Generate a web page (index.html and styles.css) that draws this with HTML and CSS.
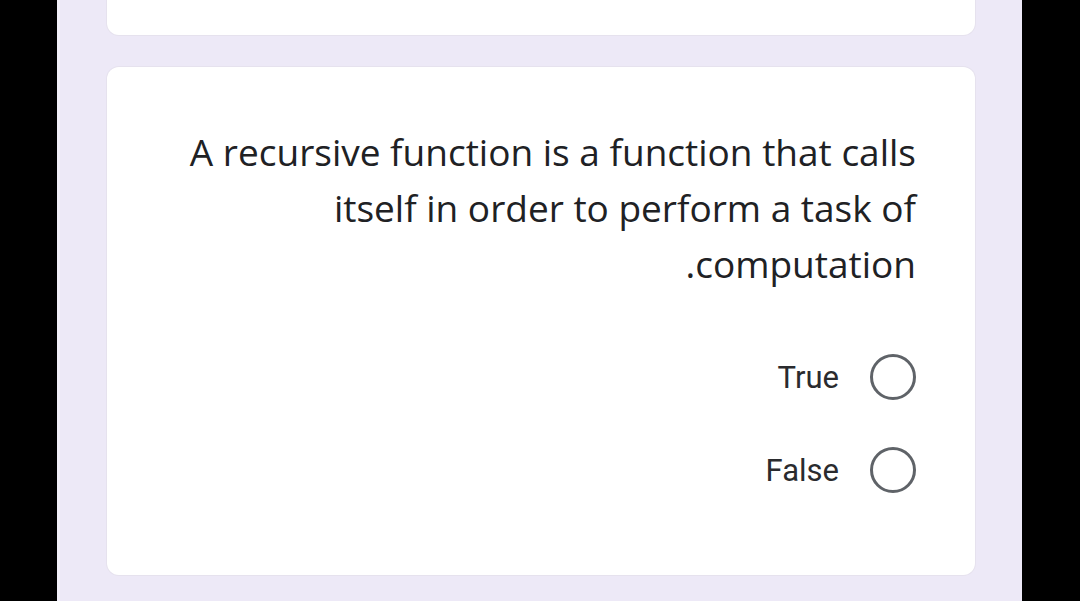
FILE: index.html
```html
<!DOCTYPE html>
<html lang="en">
<head>
<meta charset="utf-8">
<link rel="stylesheet" href="styles.css">
</head>
<body>
<div class="frame">
  <div class="card card-top"></div>
  <div class="card card-question">
    <div class="question">
      <span class="line">A recursive function is a function that calls</span>
      <span class="line">itself in order to perform a task of</span>
      <span class="line">.computation</span>
    </div>
    <div class="options">
      <label class="option"><span class="option-label">True</span><span class="radio"></span></label>
      <label class="option"><span class="option-label">False</span><span class="radio"></span></label>
    </div>
  </div>
</div>
</body>
</html>
```
FILE: styles.css
```css
html, body {
  margin: 0;
  padding: 0;
  background: #000;
  height: 100%;
  overflow: hidden;
}
.frame {
  margin-left: 57px;
  width: 965px;
  height: 601px;
  background: #ede9f7;
  box-sizing: border-box;
  padding: 0 47px 0 47px;
  display: flex;
  flex-direction: column;
  gap: 32px;
  border-left: 3px solid #f3f0fa;
}
.card {
  background: #fff;
  border-radius: 12px;
  box-shadow: 0 0 0 1px #e6e2ee;
}
.card-top {
  height: 35px;
  border-radius: 0 0 12px 12px;
}
.card-question {
  height: 508px;
  box-sizing: border-box;
  padding: 57px 59px 0 60px;
  color: #202124;
}
.question {
  display: flex;
  flex-direction: column;
  align-items: flex-end;
  font-family: "Open Sans", Roboto, sans-serif;
  font-size: 37px;
  line-height: 56px;
}
.line {
  display: block;
  white-space: nowrap;
}
.options {
  display: flex;
  flex-direction: column;
  align-items: flex-end;
  gap: 47px;
  margin-top: 62px;
}
.option {
  display: flex;
  align-items: center;
  gap: 31px;
  font-family: Roboto, "Liberation Sans", sans-serif;
  font-size: 31px;
  color: #2a2b2e;
}
.radio {
  width: 40px;
  height: 40px;
  border: 3px solid #5f6368;
  border-radius: 50%;
}
```
